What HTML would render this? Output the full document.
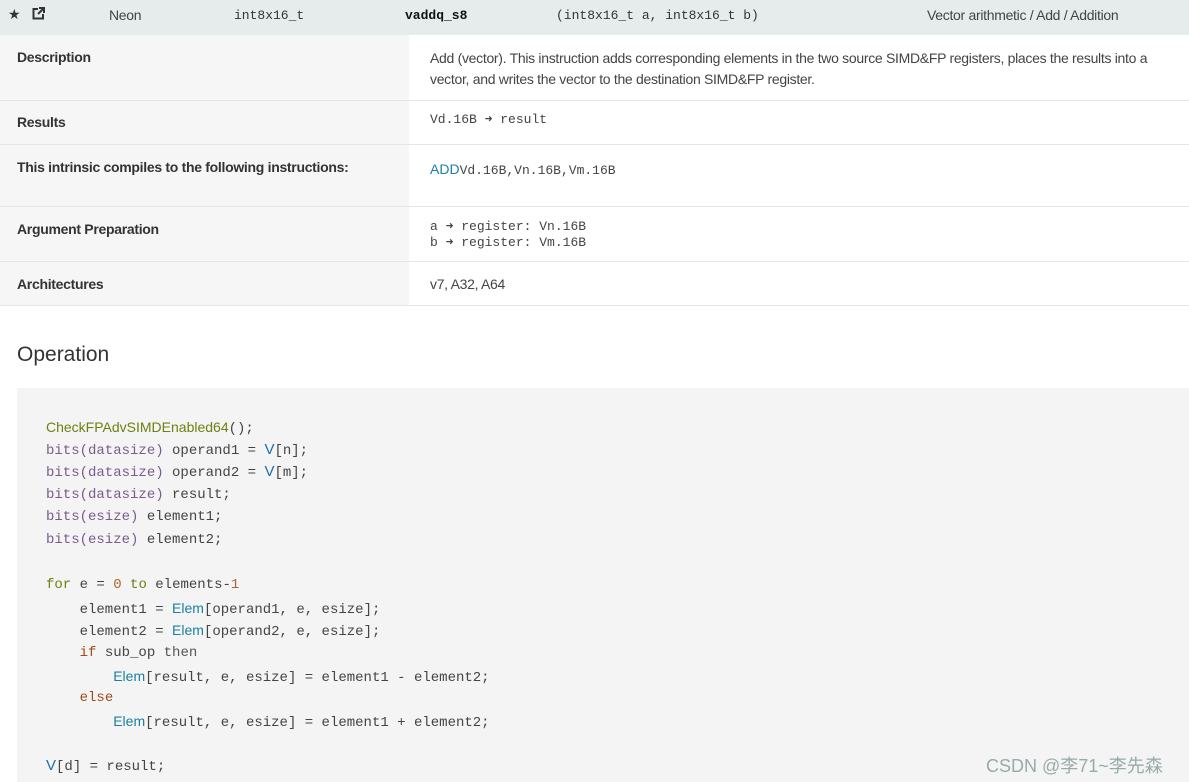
<!DOCTYPE html>
<html><head><style>
*{margin:0;padding:0;box-sizing:border-box}
html,body{width:1189px;height:782px;overflow:hidden}
body{background:#fff;font-family:"Liberation Sans",sans-serif;color:#333;position:relative}
.a{position:absolute;white-space:pre}
.m{font-family:"Liberation Mono",monospace;font-size:13px}
.s{font-size:14px;letter-spacing:-0.3px}
.b{font-weight:bold}
.code span.k{color:#7a5b8c}.code .f{color:#6f7f10}.code .r{color:#b0642a}.code .i{color:#a04a1a}.code .e{color:#1a7fa0}.code .v{color:#1f6cb0}
.code div{height:22.6px;line-height:22.6px;font-family:"Liberation Mono",monospace;font-size:14px;color:#444;white-space:pre}
.sf{font-family:"Liberation Sans",sans-serif;font-size:14px}
</style></head><body>
<div class="a" style="left:0;top:0;width:1189px;height:35px;background:#e6ecec"></div>
<div class="a" style="left:8px;top:6px;font-size:14px;color:#333">★</div>
<svg class="a" style="left:32px;top:7px" width="13" height="13" viewBox="0 0 13 13"><path d="M6 2H1.5v9.5H11V7" fill="none" stroke="#333" stroke-width="2"/><path d="M7 1h5v5M12 1L6 7" fill="none" stroke="#333" stroke-width="2"/></svg>
<div class="a s" style="left:109px;top:7px;color:#444">Neon</div>
<div class="a m" style="left:234px;top:8px">int8x16_t</div>
<div class="a m b" style="left:405px;top:8px;color:#111">vaddq_s8</div>
<div class="a m" style="left:556px;top:8px">(int8x16_t a, int8x16_t b)</div>
<div class="a s" style="left:927px;top:7px;color:#444">Vector arithmetic / Add / Addition</div>

<div class="a" style="left:0;top:35px;width:409px;height:270px;background:#f6f6f6"></div>
<div class="a" style="left:0;top:100px;width:1189px;height:1px;background:#e2e8e8"></div>
<div class="a" style="left:0;top:144px;width:1189px;height:1px;background:#e2e8e8"></div>
<div class="a" style="left:0;top:206px;width:1189px;height:1px;background:#e2e8e8"></div>
<div class="a" style="left:0;top:261px;width:1189px;height:1px;background:#e2e8e8"></div>
<div class="a" style="left:0;top:305px;width:1189px;height:1px;background:#e2e8e8"></div>

<div class="a s b" style="left:17px;top:49px;color:#333">Description</div>
<div class="a s" style="left:430px;top:48px;line-height:21px;color:#444">Add (vector). This instruction adds corresponding elements in the two source SIMD&amp;FP registers, places the results into a
vector, and writes the vector to the destination SIMD&amp;FP register.</div>
<div class="a s b" style="left:17px;top:114px">Results</div>
<div class="a m" style="left:430px;top:112px;color:#444">Vd.16B ➜ result</div>
<div class="a s b" style="left:17px;top:159px">This intrinsic compiles to the following instructions:</div>
<div class="a" style="left:430px;top:161px;font-size:14px;color:#1a7fb0">ADD<span class="m" style="color:#444">Vd.16B,Vn.16B,Vm.16B</span></div>
<div class="a s b" style="left:17px;top:221px">Argument Preparation</div>
<div class="a m" style="left:430px;top:219px;line-height:15.5px;color:#444">a ➜ register: Vn.16B
b ➜ register: Vm.16B</div>
<div class="a s b" style="left:17px;top:276px">Architectures</div>
<div class="a s" style="left:430px;top:276px;color:#444">v7, A32, A64</div>

<div class="a" style="left:17px;top:343px;font-size:21px;color:#333">Operation</div>
<div class="a code" style="left:17px;top:388px;width:1172px;height:394px;background:#f4f4f4;padding:28px 0 0 29px;white-space:normal"><div><span class="f sf">CheckFPAdvSIMDEnabled64</span>();</div><div><span class="k">bits(datasize)</span> operand1 = <span class="v sf" style="font-size:15px">V</span>[n];</div><div><span class="k">bits(datasize)</span> operand2 = <span class="v sf" style="font-size:15px">V</span>[m];</div><div><span class="k">bits(datasize)</span> result;</div><div><span class="k">bits(esize)</span> element1;</div><div><span class="k">bits(esize)</span> element2;</div><div> </div><div><span class="f">for</span> e = <span class="r">0</span> <span class="f">to</span> elements-<span class="r">1</span></div><div>    element1 = <span class="e sf">Elem</span>[operand1, e, esize];</div><div>    element2 = <span class="e sf">Elem</span>[operand2, e, esize];</div><div>    <span class="i">if</span> sub_op <span style="color:#555">then</span></div><div>        <span class="e sf">Elem</span>[result, e, esize] = element1 - element2;</div><div>    <span class="i">else</span></div><div>        <span class="e sf">Elem</span>[result, e, esize] = element1 + element2;</div><div> </div><div><span class="v sf" style="font-size:15px">V</span>[d] = result;</div></div>
<div class="a" style="left:986px;top:752px;font-family:'Liberation Sans','Noto Sans CJK SC',sans-serif;font-size:18px;color:#9aa">CSDN @李71~李先森</div>
</body></html>
